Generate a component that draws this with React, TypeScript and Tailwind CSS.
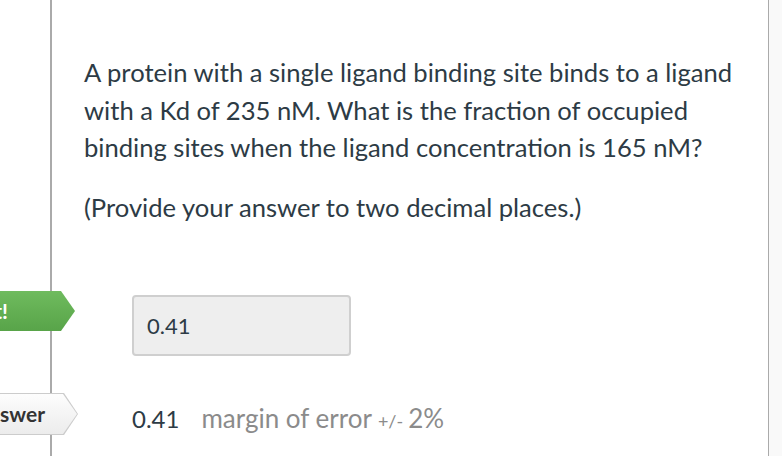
export default function App() {
  return (
    <div className="flex h-[456px] w-[782px] overflow-hidden bg-white font-['Lato','Noto_Sans',sans-serif]">
      <div className="w-[50px] shrink-0" />

      {/* Question column */}
      <div className="flex w-[719px] shrink-0 flex-col border-l-2 border-r border-[#aaaaaa]">
        <div className="pl-[32px] pr-[20px] pt-[54px] text-[25.6px] leading-[37.5px] text-[#2d3b45]">
          <p>
            A protein with a single ligand binding site binds to a ligand with a Kd of 235 nM. What is the fraction
            of occupied binding sites when the ligand concentration is 165 nM?
          </p>
          <p className="mt-[22px]">(Provide your answer to two decimal places.)</p>
        </div>

        {/* Your answer */}
        <div className="relative mt-[69px] h-[61px]">
          <div className="absolute left-[-117px] top-[-4px] h-[40px] w-[140px] bg-gradient-to-b from-[#6fbb5e] to-[#58a449] [clip-path:polygon(0_0,126px_0,140px_50%,126px_100%,0_100%)]">
            <div className="flex h-full items-center justify-end whitespace-nowrap pr-[67px] text-[21px] font-bold text-white">
              Correct!
            </div>
          </div>
          <div className="ml-[80px] flex h-[61px] w-[219px] items-center rounded-[4px] border-2 border-[#cfcfcf] bg-[#eeeeee] px-[13px] text-[22px] text-[#2d3b45]">
            0.41
          </div>
        </div>

        {/* Correct answer */}
        <div className="relative mt-[37px] flex h-[42px] items-center">
          <div className="absolute left-[-117px] top-0 h-[42px] w-[143px] bg-[#cccccc] [clip-path:polygon(0_0,129px_0,143px_50%,129px_100%,0_100%)]">
            <div className="absolute inset-[1px] bg-gradient-to-b from-[#fdfdfd] to-[#ececec] [clip-path:polygon(0_0,127px_0,141px_50%,127px_100%,0_100%)]" />
            <div className="relative flex h-full items-center justify-end whitespace-nowrap pr-[33px] text-[21px] font-bold text-[#333333]">
              Correct Answer
            </div>
          </div>
          <div className="ml-[80px] mt-[8px] flex items-baseline whitespace-nowrap text-[#2d3b45]">
            <span className="text-[24px]">0.41</span>
            <span className="ml-[22px] text-[26px] text-[#8b8b8b]">margin of error</span>
            <span className="ml-[6px] text-[18px] text-[#8b8b8b]">+/-</span>
            <span className="ml-[5px] text-[26px] text-[#8b8b8b]">2%</span>
          </div>
        </div>
      </div>

      <div className="flex-1 bg-[#f9f9f9]" />
    </div>
  )
}
